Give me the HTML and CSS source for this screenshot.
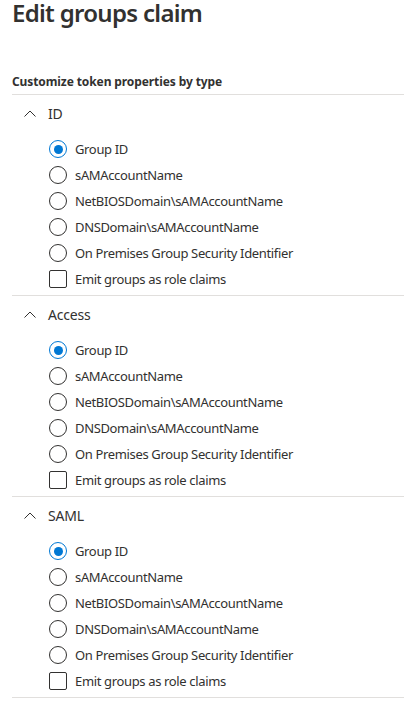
FILE: index.html
```html
<!DOCTYPE html>
<html lang="en">
<head>
<meta charset="utf-8">
<title>Edit groups claim</title>
<link rel="stylesheet" href="styles.css">
</head>
<body>
<main class="page">
  <h1 class="title">Edit groups claim</h1>
  <h2 class="subtitle">Customize token properties by type</h2>

  <section class="group">
    <div class="group-head">
      <svg class="chev" width="12" height="7" viewBox="0 0 12 7"><path d="M0.5 6.5 L6 1 L11.5 6.5" fill="none" stroke="#323130" stroke-width="1"/></svg>
      <span class="group-name">ID</span>
    </div>
    <ul class="options">
      <li class="opt"><span class="radio checked"></span><span>Group ID</span></li>
      <li class="opt"><span class="radio"></span><span>sAMAccountName</span></li>
      <li class="opt"><span class="radio"></span><span>NetBIOSDomain\sAMAccountName</span></li>
      <li class="opt"><span class="radio"></span><span>DNSDomain\sAMAccountName</span></li>
      <li class="opt"><span class="radio"></span><span>On Premises Group Security Identifier</span></li>
      <li class="opt"><span class="check"></span><span>Emit groups as role claims</span></li>
    </ul>
  </section>

  <section class="group">
    <div class="group-head">
      <svg class="chev" width="12" height="7" viewBox="0 0 12 7"><path d="M0.5 6.5 L6 1 L11.5 6.5" fill="none" stroke="#323130" stroke-width="1"/></svg>
      <span class="group-name">Access</span>
    </div>
    <ul class="options">
      <li class="opt"><span class="radio checked"></span><span>Group ID</span></li>
      <li class="opt"><span class="radio"></span><span>sAMAccountName</span></li>
      <li class="opt"><span class="radio"></span><span>NetBIOSDomain\sAMAccountName</span></li>
      <li class="opt"><span class="radio"></span><span>DNSDomain\sAMAccountName</span></li>
      <li class="opt"><span class="radio"></span><span>On Premises Group Security Identifier</span></li>
      <li class="opt"><span class="check"></span><span>Emit groups as role claims</span></li>
    </ul>
  </section>

  <section class="group">
    <div class="group-head">
      <svg class="chev" width="12" height="7" viewBox="0 0 12 7"><path d="M0.5 6.5 L6 1 L11.5 6.5" fill="none" stroke="#323130" stroke-width="1"/></svg>
      <span class="group-name">SAML</span>
    </div>
    <ul class="options">
      <li class="opt"><span class="radio checked"></span><span>Group ID</span></li>
      <li class="opt"><span class="radio"></span><span>sAMAccountName</span></li>
      <li class="opt"><span class="radio"></span><span>NetBIOSDomain\sAMAccountName</span></li>
      <li class="opt"><span class="radio"></span><span>DNSDomain\sAMAccountName</span></li>
      <li class="opt"><span class="radio"></span><span>On Premises Group Security Identifier</span></li>
      <li class="opt"><span class="check"></span><span>Emit groups as role claims</span></li>
    </ul>
  </section>
</main>
</body>
</html>
```

FILE: styles.css
```css
* { box-sizing: border-box; }
html, body { margin: 0; padding: 0; background: #ffffff; }
body {
  font-family: "Noto Sans", "Open Sans", sans-serif;
  color: #323130;
  font-size: 13px;
}
.page {
  padding: 0 0 0 12px;
}
.title {
  margin: 0;
  font-size: 24px;
  font-weight: 600;
  line-height: 26px;
  letter-spacing: -0.7px;
  height: 66px;
}
.subtitle {
  margin: 0;
  font-size: 12px;
  font-weight: 700;
  line-height: 24px;
  padding-top: 4px;
  height: 29px;
  letter-spacing: -0.1px;
  border-bottom: 1px solid #e1dfdd;
}
.group {
  border-bottom: 1px solid #e1dfdd;
  height: 201px;
}
.group-head {
  height: 36px;
  display: flex;
  align-items: center;
  padding-left: 12px;
  gap: 12px;
}
.chev { display: block; }
.group-name {
  font-size: 14px;
  letter-spacing: -0.2px;
}
.options {
  list-style: none;
  margin: 5px 0 0 0;
  padding: 0 0 0 37px;
}
.opt {
  height: 26px;
  display: flex;
  align-items: center;
  gap: 8px;
  font-size: 13px;
  letter-spacing: -0.35px;
}
.radio {
  width: 18px;
  height: 18px;
  border: 1px solid #323130;
  border-radius: 50%;
  flex: none;
  display: flex;
  align-items: center;
  justify-content: center;
}
.radio.checked {
  border-color: #0078d4;
}
.radio.checked::after {
  content: "";
  width: 9px;
  height: 9px;
  border-radius: 50%;
  background: #0078d4;
}
.check {
  width: 18px;
  height: 18px;
  border: 1px solid #323130;
  border-radius: 2px;
  flex: none;
}
```
